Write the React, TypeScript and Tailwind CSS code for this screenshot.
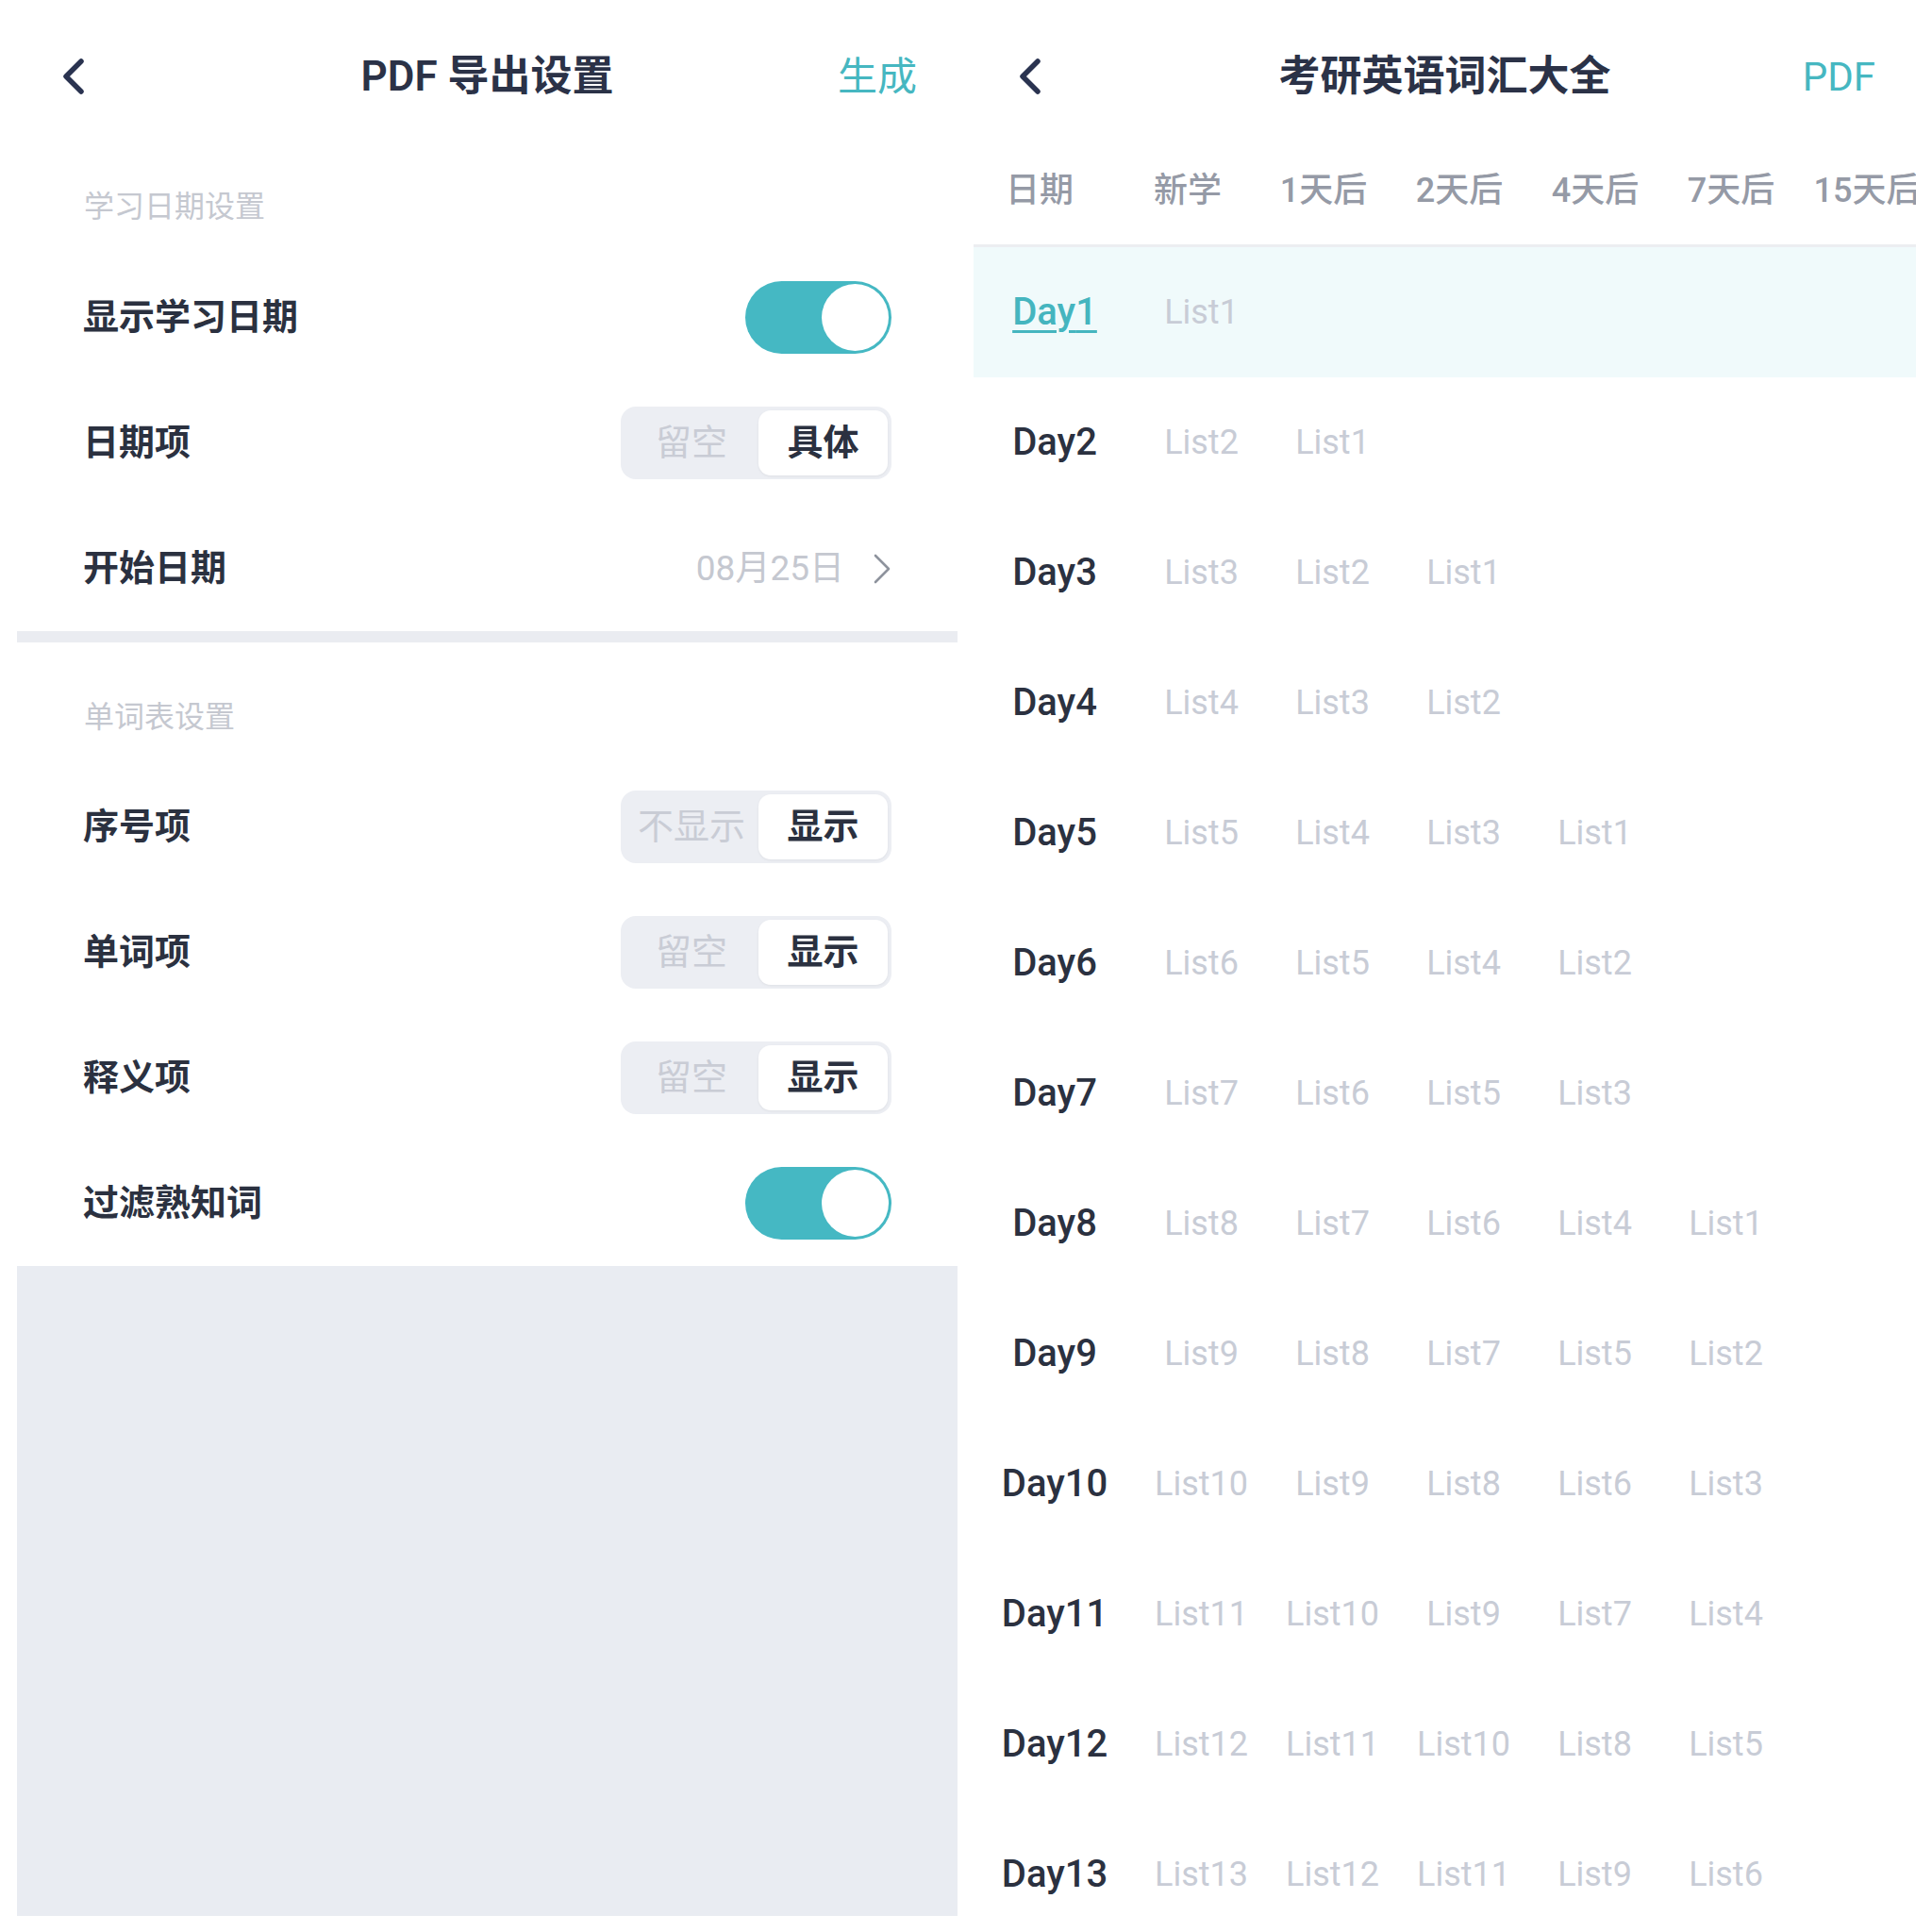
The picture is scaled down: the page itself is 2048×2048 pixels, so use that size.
import React from 'react';

const FONT = { fontFamily: 'Roboto, "Noto Sans CJK SC", sans-serif' };

const days = [
  ['List1'],
  ['List2', 'List1'],
  ['List3', 'List2', 'List1'],
  ['List4', 'List3', 'List2'],
  ['List5', 'List4', 'List3', 'List1'],
  ['List6', 'List5', 'List4', 'List2'],
  ['List7', 'List6', 'List5', 'List3'],
  ['List8', 'List7', 'List6', 'List4', 'List1'],
  ['List9', 'List8', 'List7', 'List5', 'List2'],
  ['List10', 'List9', 'List8', 'List6', 'List3'],
  ['List11', 'List10', 'List9', 'List7', 'List4'],
  ['List12', 'List11', 'List10', 'List8', 'List5'],
  ['List13', 'List12', 'List11', 'List9', 'List6'],
];

const headers = ['新学', '1天后', '2天后', '4天后', '7天后', '15天后'];

function BackIcon() {
  return (
    <svg width="26" height="40" viewBox="0 0 26 40" fill="none">
      <polyline points="21,4 5,20 21,36" stroke="#2a3350" strokeWidth="5.5" strokeLinecap="round" strokeLinejoin="round" />
    </svg>
  );
}

function Header({ title, action }: { title: string; action: string }) {
  return (
    <div className="relative flex h-[162px] shrink-0 items-center justify-between pl-[47px] pr-[43px]">
      <BackIcon />
      <span className="absolute left-1/2 top-1/2 -translate-x-1/2 -translate-y-1/2 whitespace-nowrap text-[44px] font-semibold text-[#2b3247]">
        {title}
      </span>
      <span className="text-[42px] text-[#46b7c1]">{action}</span>
    </div>
  );
}

function Toggle() {
  return (
    <div className="flex h-[77px] w-[155px] items-center justify-end rounded-full bg-[#45b8c3] p-[3px]">
      <div className="h-[71px] w-[71px] rounded-full bg-white" />
    </div>
  );
}

function Segment({ off, on }: { off: string; on: string }) {
  return (
    <div className="flex h-[77px] w-[287px] items-center rounded-[16px] bg-[#eceef3] p-[4px]">
      <div className="flex flex-1 justify-center text-[38px] text-[#c9ccd5]">{off}</div>
      <div className="flex h-full w-[137px] items-center justify-center rounded-[13px] bg-white text-[38px] font-semibold text-[#2b3140] shadow-[0_1px_3px_rgba(0,0,0,0.06)]">
        {on}
      </div>
    </div>
  );
}

function Row({ label, children }: { label: string; children: React.ReactNode }) {
  return (
    <div className="flex h-[133px] shrink-0 items-center justify-between px-[70px]">
      <span className="text-[38px] font-semibold text-[#2b3140]">{label}</span>
      {children}
    </div>
  );
}

function SettingsPanel() {
  return (
    <div className="flex h-[2031px] w-[997px] flex-col bg-white">
      <Header title="PDF 导出设置" action="生成" />
      <div className="h-[108px] shrink-0 pl-[71px] pt-[41px] text-[32px] leading-[32px] text-[#c5c8d0]">学习日期设置</div>
      <Row label="显示学习日期">
        <Toggle />
      </Row>
      <Row label="日期项">
        <Segment off="留空" on="具体" />
      </Row>
      <Row label="开始日期">
        <div className="flex items-center gap-[30px]">
          <span className="text-[37px] text-[#c5c8d0]">08月25日</span>
          <svg width="20" height="34" viewBox="0 0 20 34" fill="none">
            <polyline points="3,3 17,17 3,31" stroke="#8e939d" strokeWidth="2.6" strokeLinecap="round" strokeLinejoin="round" />
          </svg>
        </div>
      </Row>
      <div className="h-[12px] shrink-0 bg-[#eaecf1]" />
      <div className="h-[129px] shrink-0 pl-[71px] pt-[63px] text-[32px] leading-[32px] text-[#c5c8d0]">单词表设置</div>
      <Row label="序号项">
        <Segment off="不显示" on="显示" />
      </Row>
      <Row label="单词项">
        <Segment off="留空" on="显示" />
      </Row>
      <Row label="释义项">
        <Segment off="留空" on="显示" />
      </Row>
      <Row label="过滤熟知词">
        <Toggle />
      </Row>
      <div className="flex-1 bg-[#e9ecf2]" />
    </div>
  );
}

function SchedulePanel() {
  return (
    <div className="flex h-[2031px] w-[999px] flex-col overflow-hidden bg-white">
      <Header title="考研英语词汇大全" action="PDF" />
      <div className="grid h-[97px] shrink-0 grid-cols-[155px_repeat(6,144px)] items-center pb-[18px] text-[36px] font-medium text-[#959aa6]">
        <span className="whitespace-nowrap pr-[15px] text-center">日期</span>
        {headers.map((h) => (
          <span key={h} className="whitespace-nowrap text-center">
            {h}
          </span>
        ))}
      </div>
      <div className="h-[3px] shrink-0 bg-[#eceef1]" />
      {days.map((lists, i) => (
        <div
          key={i}
          className={`grid h-[138px] shrink-0 grid-cols-[172px_repeat(6,139px)] items-center ${i === 0 ? 'bg-[#f0fafb]' : ''}`}
        >
          <span
            className={`text-center text-[40px] font-medium ${
              i === 0 ? 'text-[#45b5bf] underline decoration-[3px] underline-offset-[6px]' : 'text-[#2b3140]'
            }`}
          >
            Day{i + 1}
          </span>
          {lists.map((l, j) => (
            <span key={j} className="whitespace-nowrap text-center text-[36px] text-[#c8ccd6]">
              {l}
            </span>
          ))}
        </div>
      ))}
    </div>
  );
}

export default function App() {
  return (
    <div className="flex min-h-[2048px] w-[2048px] gap-[17px] bg-white pl-[18px]" style={FONT}>
      <SettingsPanel />
      <SchedulePanel />
    </div>
  );
}
